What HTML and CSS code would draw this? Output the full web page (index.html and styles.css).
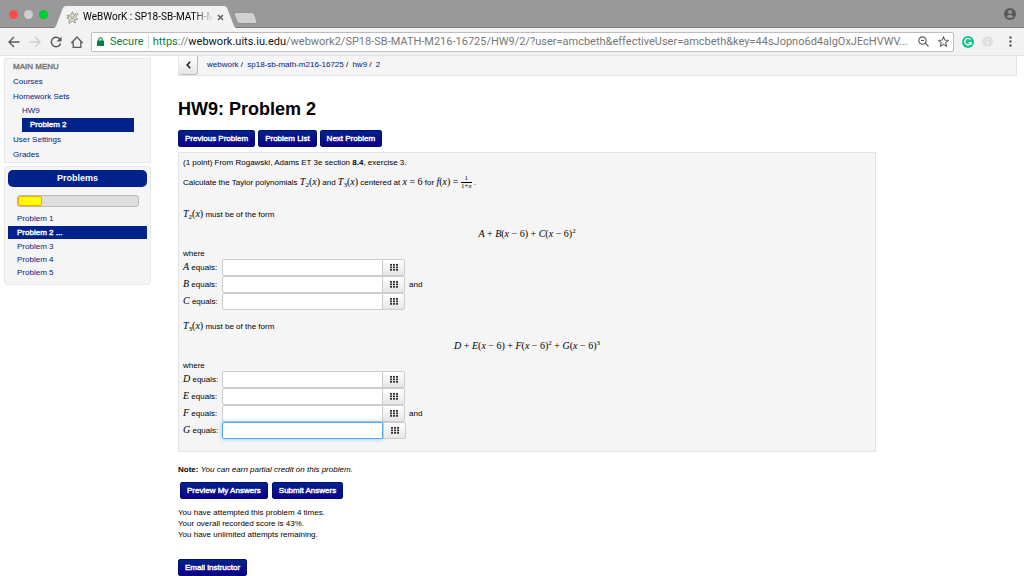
FILE: index.html
```html
<!DOCTYPE html>
<html lang="en">
<head>
	<meta charset="UTF-8">
	<title>WeBWorK : SP18-SB-MATH-M216-16725 : HW9 : 2</title>
	<meta name="viewport" content="width=device-width">
	<link rel="stylesheet" href="styles.css">
</head>
<body>
	<svg class="defs" width="0" height="0">
		<symbol id="keypad" viewBox="0 0 8 7">
			<path d="M0 0h2v1.800H0zM3 0h2v1.800H3zM6 0h2v1.800H6zM0 2.500h2v1.800H0zM3 2.500h2v1.800H3zM6 2.500h2v1.800H6zM0 5h2v1.800H0zM3 5h2v1.800H3zM6 5h2v1.800H6z" fill="#333"/>
		</symbol>
	</svg>

	<!-- browser -->
	<div class="tabs">
		<div class="lights"><i class="red"></i><i class="gray"></i><i class="green"></i></div>
		<div class="tab">
			<svg class="edge" width="12" height="22" viewBox="0 0 12 22"><path d="M0 22C2 21 2.500 19 3 17.500L8.500 3Q9.500 0 12 0V22z" fill="#f2f2f2"/></svg>
			<div class="tab-body">
				<svg width="13" height="13" viewBox="0 0 13 13" fill="#e4e2cf" stroke="#8d8c82" stroke-width=".8"><path d="M.8 4.500l4-.5L6.500 .8l1 2.700 4.500-1-2.500 3.700 2.500 2-3.300.6.8 3.200-3.500-1.800L3 12.300l.2-4L.8 6.800l2.400-.6z"/><path d="M4 5l5 4M9 4L4.500 9" fill="none"/></svg>
				<span class="tab-title">WeBWorK : SP18-SB-MATH-M</span>
				<button class="plain" aria-label="Close tab"><svg width="7" height="7" viewBox="0 0 7 7" stroke="#5a5a5a" stroke-width="1.400"><path d="M1 1l5 5M6 1L1 6"/></svg></button>
			</div>
			<svg class="edge" width="12" height="22" viewBox="0 0 12 22"><path d="M12 22C10 21 9.500 19 9 17.500L3.500 3Q2.500 0 0 0V22z" fill="#f2f2f2"/></svg>
		</div>
		<button class="plain new-tab" aria-label="New tab"><svg width="25" height="12" viewBox="0 0 25 12"><path d="M2 .5h16.500q2 0 3 2l2.500 7q0 2-2 2H7q-2 0-3-2L1 2q0-1.500 1-1.500z" fill="#d1d1d1" stroke="#888" stroke-width=".8"/></svg></button>
		<svg class="profile" width="12" height="12" viewBox="0 0 12 12"><circle cx="6" cy="6" r="6" fill="#5a5a5a"/><circle cx="6" cy="4" r="2" fill="#999"/><path d="M2.500 8.500Q6 5 9.500 8.500 6 11.500 2.500 8.500z" fill="#999"/></svg>
	</div>
	<div class="toolbar">
		<div class="history">
			<button class="plain" aria-label="Back"><svg width="12" height="12" viewBox="0 0 12 12" fill="none" stroke="#5a5a5a" stroke-width="1.400"><path d="M11.500 6H1.500M6 1L1 6l5 5"/></svg></button>
			<button class="plain" aria-label="Forward"><svg width="12" height="12" viewBox="0 0 12 12" fill="none" stroke="#cfcfcf" stroke-width="1.400"><path d="M.5 6h10M6 1l5 5-5 5"/></svg></button>
			<button class="plain" aria-label="Reload"><svg width="12" height="12" viewBox="0 0 12 12" fill="none" stroke="#5a5a5a" stroke-width="1.500"><path d="M10.500 7.500A4.700 4.700 0 1 1 9.500 2.800"/><path d="M11.500 .5v5h-5z" fill="#5a5a5a" stroke="none"/></svg></button>
			<button class="plain" aria-label="Home"><svg width="12" height="12" viewBox="0 0 12 12" fill="none" stroke="#5a5a5a" stroke-width="1.300"><path d="M.8 6.500L6 1l5.200 5.500H9.800V11.300H2.200V6.500z"/></svg></button>
		</div>
		<div class="address">
			<svg width="7" height="9" viewBox="0 0 7 9"><rect y="3.500" width="7" height="5.500" rx=".6" fill="#0b8043"/><path d="M1.700 4V2.500a1.800 1.800 0 0 1 3.600 0V4" fill="none" stroke="#0b8043" stroke-width="1.100"/></svg>
			<span class="secure">Secure</span>
			<div class="url" role="textbox" aria-label="Address"><span class="https">https</span>://<b>webwork.uits.iu.edu</b>/webwork2/SP18-SB-MATH-M216-16725/HW9/2/?user=amcbeth&amp;effectiveUser=amcbeth&amp;key=44sJopno6d4algOxJEcHVWV...</div>
			<button class="plain" aria-label="Zoom"><svg width="11" height="11" viewBox="0 0 11 11" fill="none" stroke="#5f5f5f" stroke-width="1.200"><circle cx="4.500" cy="4.500" r="3.700"/><path d="M7 7l3.500 3.500M3 4.500h3"/></svg></button>
			<button class="plain" aria-label="Bookmark"><svg width="11" height="11" viewBox="0 0 11 11" fill="none" stroke="#5f5f5f" stroke-width="1.100"><path d="M5.500 .9l1.400 3.200 3.500.3-2.700 2.300.8 3.400-3-1.800-3 1.800.8-3.400L.6 4.400l3.500-.3z"/></svg></button>
		</div>
		<button class="plain" aria-label="Grammar"><svg width="12" height="12" viewBox="0 0 12 12"><circle cx="6" cy="6" r="6" fill="#15c388"/><path d="M8.500 3.700A3.200 3.200 0 1 0 9 6.700H6.500M9 6.500v2.300" fill="none" stroke="#fff" stroke-width="1.200"/></svg></button>
		<button class="plain" aria-label="Info"><svg width="11" height="11" viewBox="0 0 11 11"><circle cx="5.500" cy="5.500" r="5.500" fill="#e0e0e0"/><path d="M5.500 2.500V4M5.500 5v3.500" stroke="#f5f5f5" stroke-width="1.300"/></svg></button>
		<button class="plain more" aria-label="Menu"><svg width="3" height="11" viewBox="0 0 3 11" fill="#5a5a5a"><circle cx="1.500" cy="1.500" r="1.200"/><circle cx="1.500" cy="5.500" r="1.200"/><circle cx="1.500" cy="9.500" r="1.200"/></svg></button>
	</div>

	<!-- page -->
	<div class="page">
		<div class="sidebar">
			<nav class="menu">
				<h2>MAIN MENU</h2>
				<ul>
					<li><a href="#">Courses</a></li>
					<li><a href="#">Homework Sets</a>
						<ul>
							<li><a href="#">HW9</a></li>
							<li><a href="#" class="active">Problem 2</a></li>
						</ul>
					</li>
					<li><a href="#">User Settings</a></li>
					<li><a href="#">Grades</a></li>
				</ul>
			</nav>
			<div class="problems">
				<h2>Problems</h2>
				<div class="progress"><div class="bar" style="width: 20%"></div></div>
				<ul>
					<li><a href="#">Problem 1</a></li>
					<li class="active"><a href="#">Problem 2 ...</a></li>
					<li><a href="#">Problem 3</a></li>
					<li><a href="#">Problem 4</a></li>
					<li><a href="#">Problem 5</a></li>
				</ul>
			</div>
		</div>

		<main class="content">
			<div class="crumbs">
				<button class="toggle" aria-label="Toggle menu"><svg width="5" height="8" viewBox="0 0 5 8" fill="none" stroke="#222" stroke-width="1.600"><path d="M4.200 .8L1.200 4l3 3.200"/></svg></button>
				<div class="trail"><a href="#">webwork</a> / <a href="#">sp18-sb-math-m216-16725</a> / <a href="#">hw9</a> / <a href="#">2</a></div>
			</div>
			<h1>HW9: Problem 2</h1>
			<div class="buttons">
				<button class="btn">Previous Problem</button>
				<button class="btn">Problem List</button>
				<button class="btn">Next Problem</button>
			</div>

			<form class="problem" id="problem">
				<p>(1 point) From Rogawski, Adams ET 3e section <b>8.4</b>, exercise 3.</p>
				<p class="task">Calculate the Taylor polynomials <span class="math"><i>T</i><sub>2</sub>(<i>x</i>)</span> and <span class="math"><i>T</i><sub>3</sub>(<i>x</i>)</span> centered at <span class="math"><i>x</i> = 6</span> for <span class="math"><i>f</i>(<i>x</i>) = <span class="frac"><span>1</span><span>1+<i>x</i></span></span></span> .</p>

				<p><span class="math"><i>T</i><sub>2</sub>(<i>x</i>)</span> must be of the form</p>
				<p class="display"><span class="math"><i>A</i> + <i>B</i>(<i>x</i> − 6) + <i>C</i>(<i>x</i> − 6)<sup>2</sup></span></p>
				<p>where</p>
				<div class="answer"><label for="a"><i class="math">A</i> equals:</label><input type="text" id="a"><button type="button" aria-label="Equation editor"><svg width="8" height="7"><use href="#keypad"/></svg></button></div>
				<div class="answer"><label for="b"><i class="math">B</i> equals:</label><input type="text" id="b"><button type="button" aria-label="Equation editor"><svg width="8" height="7"><use href="#keypad"/></svg></button><span>and</span></div>
				<div class="answer"><label for="c"><i class="math">C</i> equals:</label><input type="text" id="c"><button type="button" aria-label="Equation editor"><svg width="8" height="7"><use href="#keypad"/></svg></button></div>

				<p class="second"><span class="math"><i>T</i><sub>3</sub>(<i>x</i>)</span> must be of the form</p>
				<p class="display"><span class="math"><i>D</i> + <i>E</i>(<i>x</i> − 6) + <i>F</i>(<i>x</i> − 6)<sup>2</sup> + <i>G</i>(<i>x</i> − 6)<sup>3</sup></span></p>
				<p>where</p>
				<div class="answer"><label for="d"><i class="math">D</i> equals:</label><input type="text" id="d"><button type="button" aria-label="Equation editor"><svg width="8" height="7"><use href="#keypad"/></svg></button></div>
				<div class="answer"><label for="e"><i class="math">E</i> equals:</label><input type="text" id="e"><button type="button" aria-label="Equation editor"><svg width="8" height="7"><use href="#keypad"/></svg></button></div>
				<div class="answer"><label for="f"><i class="math">F</i> equals:</label><input type="text" id="f"><button type="button" aria-label="Equation editor"><svg width="8" height="7"><use href="#keypad"/></svg></button><span>and</span></div>
				<div class="answer"><label for="g"><i class="math">G</i> equals:</label><input type="text" id="g" class="focused"><button type="button" aria-label="Equation editor"><svg width="8" height="7"><use href="#keypad"/></svg></button></div>
			</form>

			<p class="note"><b>Note:</b> <em>You can earn partial credit on this problem.</em></p>
			<div class="buttons submit">
				<button class="btn" form="problem">Preview My Answers</button>
				<button class="btn" form="problem">Submit Answers</button>
			</div>
			<p>You have attempted this problem 4 times.<br>Your overall recorded score is 43%.<br>You have unlimited attempts remaining.</p>
			<div class="buttons email">
				<button class="btn">Email instructor</button>
			</div>
		</main>
	</div>
</body>
</html>
```
FILE: styles.css
```css
* {
	box-sizing: border-box;
	margin: 0;
	padding: 0;
}

body {
	display: flex;
	flex-direction: column;
	height: 100vh;
	overflow: hidden;
	background: #fff;
	color: #000;
	font: 8px/11px "Liberation Sans", Arial, sans-serif;
}

ul {
	list-style: none;
}

a {
	color: #001a80;
	text-decoration: none;
}

svg {
	display: block;
	flex: none;
}

.defs {
	position: absolute;
}

.plain {
	flex: none;
	background: none;
	border: 0;
}

/* browser */

.tabs {
	display: flex;
	flex: none;
	align-items: flex-end;
	height: 28px;
	padding: 0 8px 0 9px;
	background: #999;
	border-bottom: 1px solid #7d7d7d;
	font: 10px/14px Roboto, sans-serif;
}

.lights {
	display: flex;
	gap: 6px;
	width: 45px;
	padding-bottom: 8px;
}

.lights i {
	width: 9px;
	height: 9px;
	border-radius: 50%;
}

.red {
	background: #ff4b47;
}

.gray {
	background: #cdcdcd;
}

.green {
	background: #00ce2d;
}

.tab {
	display: flex;
	width: 182px;
	height: 22px;
	margin-bottom: -1px;
}

.tab-body {
	display: flex;
	flex: 1;
	align-items: center;
	gap: 4px;
	min-width: 0;
	background: #f2f2f2;
}

.tab-title {
	flex: 1;
	min-width: 0;
	white-space: nowrap;
	-webkit-mask-image: linear-gradient(to right, #000 85%, transparent);
	mask-image: linear-gradient(to right, #000 85%, transparent);
}

.new-tab {
	margin: 0 auto 3px -3px;
}

.profile {
	margin-bottom: 7px;
}

.toolbar {
	display: flex;
	flex: none;
	align-items: center;
	gap: 8px;
	height: 28px;
	padding: 0 12px 0 8px;
	background: #f2f2f2;
	border-bottom: 1px solid #e2e2e2;
	font: 11px/14px Roboto, sans-serif;
}

.history {
	display: flex;
	gap: 9px;
}

.address {
	display: flex;
	flex: 1;
	align-items: center;
	gap: 4px;
	min-width: 0;
	height: 20px;
	padding: 0 4px 0 5px;
	background: #fff;
	border: 1px solid #bdbdbd;
	border-radius: 2px;
}

.address .plain {
	margin-left: 5px;
}

.more {
	margin-left: 8px;
}

.secure,
.https {
	color: #0b8043;
}

.secure {
	margin-left: 2px;
}

.url {
	flex: 1;
	padding-left: 4px;
	border-left: 1px solid #d5d5d5;
	color: #777;
	white-space: nowrap;
}

.url b {
	color: #111;
	font-weight: normal;
}

/* page */

.page {
	display: flex;
	flex: 1;
	align-items: flex-start;
	gap: 27px;
	min-height: 0;
	padding: 0 7px 0 4px;
}

.sidebar {
	flex: none;
	width: 15%;
	max-width: 147px;
	padding-top: 2px;
}

.menu,
.problems {
	background: #f5f5f5;
	border: 1px solid #e8e8e8;
}

.menu {
	padding: 0 8px;
	line-height: 15px;
}

.menu h2 {
	color: #777;
	font-size: 8px;
	font-weight: normal;
	line-height: 15px;
	-webkit-text-stroke: .4px #777;
}

.menu a {
	display: block;
}

.menu ul ul {
	margin: 0 8px 0 9px;
	line-height: 14px;
}

.menu .active {
	padding-left: 8px;
	background: #00228b;
	color: #fff;
}

/* semi-bold look without the wider bold letters */
.menu .active,
.problems .active,
.btn {
	-webkit-text-stroke: .4px #fff;
}

.problems {
	margin-top: 3px;
	padding: 3px 3px 5px;
	border-radius: 4px;
}

.problems h2 {
	background: #00228b;
	border-radius: 5px;
	color: #fff;
	font-size: 9px;
	line-height: 17px;
	text-align: center;
}

.progress {
	height: 12px;
	margin: 8px 8px 5px 9px;
	background: #ddd;
	border: 1px solid #bbb;
	border-radius: 3px;
}

.bar {
	height: 100%;
	background: #ff0;
	border: 1px solid #ffa500;
	border-radius: 2px;
}

.problems li {
	padding-left: 9px;
	line-height: 13px;
}

.problems .active {
	margin: 1px 0;
	background: #00228b;
}

.problems .active a {
	color: #fff;
}

.content {
	flex: 1;
	min-width: 0;
}

.crumbs {
	display: flex;
	height: 20px;
	background: #f5f5f5;
	border: 1px solid #e5e5e5;
	border-top: 0;
}

.toggle {
	display: flex;
	align-items: center;
	justify-content: center;
	width: 19px;
	background: linear-gradient(#fff, #e6e6e6);
	border: 1px solid #bbb;
	border-width: 0 1px 1px 0;
	border-radius: 0 0 3px 3px;
}

.trail {
	padding-left: 9px;
	line-height: 18px;
}

.trail a + a {
	margin-left: 2px;
}

h1 {
	margin: 21px 0 9px;
	font-size: 18px;
	line-height: 24px;
}

.buttons {
	display: flex;
	gap: 3px;
}

.btn {
	height: 17px;
	padding: 0 6px;
	background: linear-gradient(#00228b, #10008b);
	border: 1px solid #00106e;
	border-radius: 2px;
	color: #fff;
	font: 8px/11px "Liberation Sans", Arial, sans-serif;
}

.problem {
	width: 83.2%;
	margin-top: 5px;
	padding: 4px 4px 12px;
	background: #f5f5f5;
	border: 1px solid #e3e3e3;
}

.problem .task {
	margin: 9px 0 21px;
}

.math {
	font-family: "Liberation Serif", "Times New Roman", serif;
	font-size: 10px;
	line-height: 0;
}

sub,
sup {
	font-size: 7px;
	line-height: 0;
}

sub {
	vertical-align: -2px;
}

sup {
	vertical-align: 4px;
}

.display {
	margin: 9px 0 8px;
	text-align: center;
}

.frac {
	display: inline-flex;
	flex-direction: column;
	margin: -4px 0;
	font-size: 7px;
	line-height: 7px;
	text-align: center;
	vertical-align: middle;
}

.frac span + span {
	border-top: 1px solid #000;
}

.answer {
	display: flex;
	align-items: center;
	height: 17px;
}

.answer label {
	width: 39px;
	white-space: nowrap;
}

.answer input {
	width: 161px;
	height: 17px;
	padding: 0 4px;
	background: #fff;
	border: 1px solid #ccc;
	border-radius: 2px 0 0 2px;
	font: inherit;
}

.answer .focused {
	border-color: #52a8ec;
	box-shadow: 0 0 4px rgba(82, 168, 236, .6);
}

.answer button {
	display: flex;
	align-items: center;
	justify-content: center;
	width: 23px;
	height: 17px;
	margin-left: -1px;
	background: linear-gradient(#fff, #e6e6e6);
	border: 1px solid #ccc;
	border-radius: 0 2px 2px 0;
}

.answer .focused + button {
	margin-left: 0;
}

.answer span {
	margin-left: 4px;
}

.second {
	margin-top: 11px;
}

.note {
	margin: 12px 0 7px;
}

.submit {
	gap: 4px;
	margin-bottom: 8px;
	padding-left: 2px;
}

.email {
	margin-top: 19px;
}
```
